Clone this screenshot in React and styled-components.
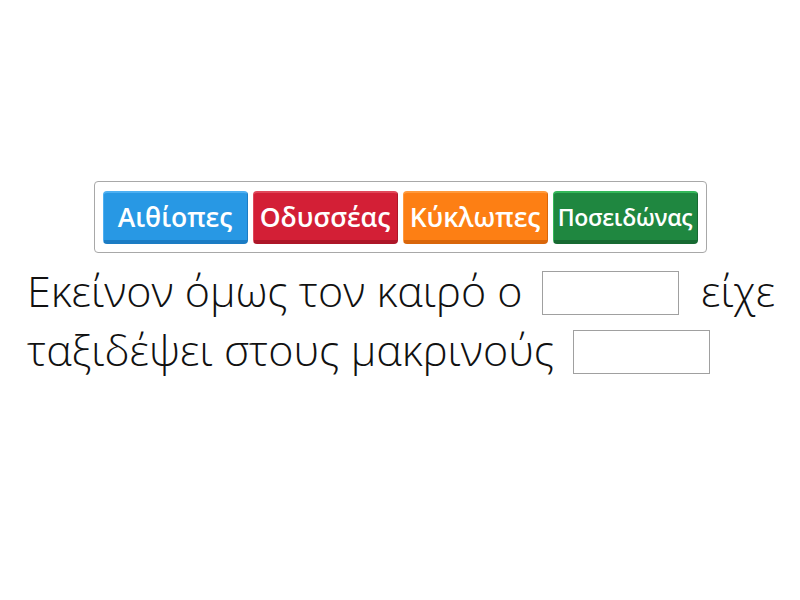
import styled, { createGlobalStyle } from "styled-components";

const GlobalStyle = createGlobalStyle`
  html, body {
    margin: 0;
    padding: 0;
    background: #fff;
  }
  body {
    font-family: "Open Sans", "Noto Sans", sans-serif;
  }
`;

const Page = styled.div`
  width: 800px;
  height: 600px;
  display: flex;
  flex-direction: column;
  align-items: center;
  padding-top: 181px;
  box-sizing: border-box;
`;

const Bank = styled.div`
  display: flex;
  gap: 5px;
  padding: 9px 8px 8px 8px;
  border: 1px solid #a8a8a8;
  border-radius: 4px;
  background: #fff;
`;

const palette = {
  blue: { top: "#4eb0f2", face: "#2898e4", bottom: "#1b7cc4" },
  red: { top: "#e0485a", face: "#d31f36", bottom: "#ad1628" },
  orange: { top: "#ff9a3c", face: "#fd7f14", bottom: "#d9660a" },
  green: { top: "#34b85a", face: "#1f8740", bottom: "#176a32" },
};

const Tile = styled.div`
  width: 145px;
  height: 53px;
  box-sizing: border-box;
  display: flex;
  align-items: center;
  justify-content: center;
  border-radius: 4px;
  background: ${(p) => palette[p.$tone].face};
  border-top: 2px solid ${(p) => palette[p.$tone].top};
  border-left: 1px solid ${(p) => palette[p.$tone].top};
  border-right: 1px solid ${(p) => palette[p.$tone].bottom};
  border-bottom: 4px solid ${(p) => palette[p.$tone].bottom};
  color: #fff;
  font-family: "Open Sans", "Noto Sans", sans-serif;
  font-weight: 600;
  font-size: ${(p) => (p.$small ? "23px" : "26.5px")};
  letter-spacing: ${(p) => (p.$small ? "-0.3px" : "0")};
  white-space: nowrap;
  cursor: pointer;
`;

const Sentence = styled.div`
  width: 800px;
  box-sizing: border-box;
  padding: 0 14px 0 27px;
  margin-top: 8px;
  text-align: left;
  font-family: "Open Sans", "Noto Sans", sans-serif;
  font-weight: 350;
  font-size: 43px;
  line-height: 59px;
  color: #111;
`;

const Blank = styled.span`
  display: inline-block;
  width: 137px;
  height: 44px;
  box-sizing: border-box;
  border: 1px solid #a0a0a0;
  vertical-align: middle;
  margin: 0 11px 0 8px;
  position: relative;
  top: -3px;
`;

const words = [
  { label: "Αιθίοπες", tone: "blue" },
  { label: "Οδυσσέας", tone: "red" },
  { label: "Κύκλωπες", tone: "orange" },
  { label: "Ποσειδώνας", tone: "green", small: true },
];

export default function App() {
  return (
    <>
      <GlobalStyle />
      <Page>
        <Bank>
          {words.map((w) => (
            <Tile key={w.label} $tone={w.tone} $small={w.small}>
              {w.label}
            </Tile>
          ))}
        </Bank>
        <Sentence>
          Εκείνον όμως τον καιρό ο <Blank /> είχε ταξιδέψει στους μακρινούς <Blank />
        </Sentence>
      </Page>
    </>
  );
}
